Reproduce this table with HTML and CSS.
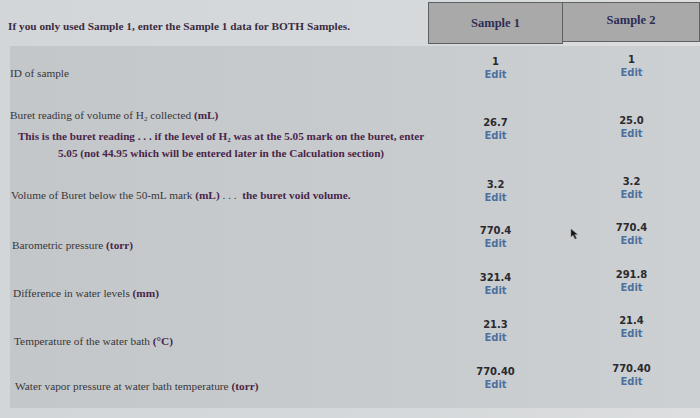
FILE: index.html
```html
<!DOCTYPE html>
<html>
<head>
<meta charset="utf-8">
<link rel="stylesheet" href="styles.css">
</head>
<body>
<div class="page">
  <div class="head">
    <div class="note">If you only used Sample 1, enter the Sample 1 data for BOTH Samples.</div>
    <div class="hcell">Sample 1</div>
    <div class="hcell h2">Sample 2</div>
  </div>
  <div class="table">
    <div class="row r1">
      <div class="lab">ID of sample</div>
      <div class="val"><span class="num">1</span><a class="edit">Edit</a></div>
      <div class="val v2"><span class="num">1</span><a class="edit">Edit</a></div>
    </div>
    <div class="row r2">
      <div class="lab">Buret reading of volume of H<span class="sub">2</span> collected <b>(mL)</b>
        <p class="hint">This is the buret reading . . . if the level of H<span class="sub">2</span> was at the 5.05 mark on the buret, enter<br>5.05 (not 44.95 which will be entered later in the Calculation section)</p>
      </div>
      <div class="val"><span class="num">26.7</span><a class="edit">Edit</a></div>
      <div class="val v2"><span class="num">25.0</span><a class="edit">Edit</a></div>
    </div>
    <div class="row r3">
      <div class="lab">Volume of Buret below the 50-mL mark <b>(mL)</b> . . . &nbsp;<b>the buret void volume.</b></div>
      <div class="val"><span class="num">3.2</span><a class="edit">Edit</a></div>
      <div class="val v2"><span class="num">3.2</span><a class="edit">Edit</a></div>
    </div>
    <div class="row r4">
      <div class="lab">Barometric pressure <b>(torr)</b></div>
      <div class="val"><span class="num">770.4</span><a class="edit">Edit</a></div>
      <div class="val v2"><span class="num">770.4</span><a class="edit">Edit</a></div>
      <svg class="cursor" width="9" height="12" viewBox="0 0 9 12"><path d="M1 1 L1 9 L3 7 L5 11 L6.5 10.3 L4.6 6.5 L7.5 6.5 Z" fill="#111" stroke="#777" stroke-width="0.6"/></svg>
    </div>
    <div class="row r5">
      <div class="lab">Difference in water levels <b>(mm)</b></div>
      <div class="val"><span class="num">321.4</span><a class="edit">Edit</a></div>
      <div class="val v2"><span class="num">291.8</span><a class="edit">Edit</a></div>
    </div>
    <div class="row r6">
      <div class="lab">Temperature of the water bath <b>(°C)</b></div>
      <div class="val"><span class="num">21.3</span><a class="edit">Edit</a></div>
      <div class="val v2"><span class="num">21.4</span><a class="edit">Edit</a></div>
    </div>
    <div class="row r7">
      <div class="lab">Water vapor pressure at water bath temperature <b>(torr)</b></div>
      <div class="val"><span class="num">770.40</span><a class="edit">Edit</a></div>
      <div class="val v2"><span class="num">770.40</span><a class="edit">Edit</a></div>
    </div>
  </div>
</div>
</body>
</html>
```
FILE: styles.css
```css
html, body {
  margin: 0;
  padding: 0;
}
body {
  width: 700px;
  height: 418px;
  overflow: hidden;
  background: #d8dadc;
  font-family: "Liberation Serif", "Times New Roman", serif;
}
.page {
  display: flex;
  flex-direction: column;
  height: 418px;
  background: linear-gradient(90deg, #d3d6d8 0%, #d6d9db 60%, #dcdedf 100%);
}
.head {
  display: flex;
  height: 46px;
  padding-top: 2px;
  box-sizing: border-box;
}
.note {
  width: 428px;
  padding: 18px 0 0 8px;
  box-sizing: border-box;
  font-size: 11.3px;
  font-weight: bold;
  color: #3b2c3f;
}
.hcell {
  width: 135px;
  height: 42px;
  box-sizing: border-box;
  background: #a9a9aa;
  border: 1px solid #5e5f60;
  display: flex;
  justify-content: center;
  padding-top: 13px;
  font-size: 12.5px;
  font-weight: bold;
  color: #2e2d55;
}
.hcell.h2 {
  width: 137px;
  height: 40px;
  border-left: none;
  padding-top: 10px;
}
.table {
  margin-left: 10px;
  height: 362px;
  background: linear-gradient(90deg, #c3c7ca 0%, #c7cbce 50%, #cdd0d2 100%);
  position: relative;
}
.row {
  display: grid;
  grid-template-columns: 418px 135px 137px;
  position: relative;
}
.lab {
  font-size: 11.3px;
  line-height: 14px;
  color: #3a3638;
}
.lab b {
  color: #4a2548;
}
.sub {
  font-size: 7px;
  line-height: 0;
  vertical-align: -2px;
}
.hint {
  margin: 6px 0 0 0;
  padding: 0 0 0 4px;
  white-space: nowrap;
  text-align: center;
  font-size: 11.2px;
  font-weight: bold;
  line-height: 17px;
  color: #4a2548;
}
.val {
  display: flex;
  flex-direction: column;
  align-items: center;
  font-family: "DejaVu Sans", Verdana, sans-serif;
  font-weight: bold;
  font-size: 10px;
  line-height: 13px;
}
.num {
  color: #2a2a2e;
}
.edit {
  color: #4d709e;
}
.r1 { height: 52px; }
.r1 .lab { padding-top: 20px; }
.r1 .val { padding-top: 9px; }
.r1 .v2 { padding-top: 7px; }

.r2 { height: 62px; }
.r2 .lab { padding-top: 10px; }
.r2 .val { padding-top: 18px; }
.r2 .v2 { padding-top: 16px; }

.r3 { height: 54px; }
.r3 .lab { padding: 28px 0 0 1px; }
.r3 .val { padding-top: 18px; }
.r3 .v2 { padding-top: 15px; }

.r4 { height: 46px; }
.r4 .lab { padding: 24px 0 0 2px; }
.r4 .val { padding-top: 10px; }
.r4 .v2 { padding-top: 7px; }

.r5 { height: 47px; }
.r5 .lab { padding: 26px 0 0 3px; }
.r5 .val { padding-top: 11px; }
.r5 .v2 { padding-top: 8px; }

.r6 { height: 47px; }
.r6 .lab { padding: 27px 0 0 4px; }
.r6 .val { padding-top: 11px; }
.r6 .v2 { padding-top: 7px; }

.r7 { height: 54px; }
.r7 .lab { padding: 25px 0 0 5px; }
.r7 .val { padding-top: 11px; }
.r7 .v2 { padding-top: 8px; }

.cursor {
  position: absolute;
  left: 560px;
  top: 14px;
}
```
